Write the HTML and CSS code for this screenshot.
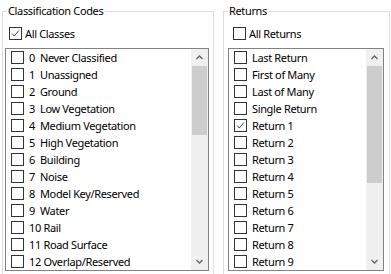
FILE: index.html
```html
<!DOCTYPE html>
<html>
<head>
<meta charset="utf-8">
<link rel="stylesheet" href="styles.css">
</head>
<body>
<div class="panes">
  <fieldset class="group group-codes">
    <legend>Classification Codes</legend>
    <label class="check all-row"><span class="box"><svg viewBox="0 0 13 13" class="tick"><polyline points="2.5,6.5 5,9.5 10.5,3"/></svg></span>All Classes</label>
    <div class="listbox list-codes">
      <ul class="items">
        <li><span class="box"></span><span class="label">0  Never Classified</span></li>
        <li><span class="box"></span><span class="label">1  Unassigned</span></li>
        <li><span class="box"></span><span class="label">2  Ground</span></li>
        <li><span class="box"></span><span class="label">3  Low Vegetation</span></li>
        <li><span class="box"></span><span class="label">4  Medium Vegetation</span></li>
        <li><span class="box"></span><span class="label">5  High Vegetation</span></li>
        <li><span class="box"></span><span class="label">6  Building</span></li>
        <li><span class="box"></span><span class="label">7  Noise</span></li>
        <li><span class="box"></span><span class="label">8  Model Key/Reserved</span></li>
        <li><span class="box"></span><span class="label">9  Water</span></li>
        <li><span class="box"></span><span class="label">10 Rail</span></li>
        <li><span class="box"></span><span class="label">11 Road Surface</span></li>
        <li><span class="box"></span><span class="label">12 Overlap/Reserved</span></li>
      </ul>
      <div class="scrollbar">
        <div class="sb-btn"><svg viewBox="0 0 17 17" class="arrow"><polyline points="5.5,10 8.5,7 11.5,10"/></svg></div>
        <div class="track"><div class="thumb thumb-codes"></div></div>
        <div class="sb-btn"><svg viewBox="0 0 17 17" class="arrow"><polyline points="5.5,7 8.5,10 11.5,7"/></svg></div>
      </div>
    </div>
  </fieldset>
  <fieldset class="group group-returns">
    <legend>Returns</legend>
    <label class="check all-row"><span class="box"></span>All Returns</label>
    <div class="listbox list-returns">
      <ul class="items">
        <li><span class="box"></span><span class="label">Last Return</span></li>
        <li><span class="box"></span><span class="label">First of Many</span></li>
        <li><span class="box"></span><span class="label">Last of Many</span></li>
        <li><span class="box"></span><span class="label">Single Return</span></li>
        <li><span class="box"><svg viewBox="0 0 13 13" class="tick"><polyline points="2.5,6.5 5,9.5 10.5,3"/></svg></span><span class="label">Return 1</span></li>
        <li><span class="box"></span><span class="label">Return 2</span></li>
        <li><span class="box"></span><span class="label">Return 3</span></li>
        <li><span class="box"></span><span class="label">Return 4</span></li>
        <li><span class="box"></span><span class="label">Return 5</span></li>
        <li><span class="box"></span><span class="label">Return 6</span></li>
        <li><span class="box"></span><span class="label">Return 7</span></li>
        <li><span class="box"></span><span class="label">Return 8</span></li>
        <li><span class="box"></span><span class="label">Return 9</span></li>
      </ul>
      <div class="scrollbar">
        <div class="sb-btn"><svg viewBox="0 0 17 17" class="arrow"><polyline points="5.5,10 8.5,7 11.5,10"/></svg></div>
        <div class="track"><div class="thumb thumb-returns"></div></div>
        <div class="sb-btn"><svg viewBox="0 0 17 17" class="arrow"><polyline points="5.5,7 8.5,10 11.5,7"/></svg></div>
      </div>
    </div>
  </fieldset>
</div>
</body>
</html>
```

FILE: styles.css
```css
html, body {
  margin: 0;
  padding: 0;
  background: #ffffff;
  overflow: hidden;
}
body {
  font-family: "Noto Sans", "Segoe UI", sans-serif;
  font-size: 11px;
  letter-spacing: -0.35px;
  color: #000000;
}
.panes {
  display: flex;
  gap: 9px;
  padding: 4px 0 0 2px;
}
.group {
  margin: 0;
  border: 1px solid #dcdcdc;
  padding: 0;
  height: 300px;
  min-width: 0;
  box-sizing: border-box;
}
.group legend {
  padding: 0 2px 0 1px;
  margin-left: 4px;
  line-height: 14px;
  height: 14px;
}
.group-codes { width: 212px; }
.group-returns { width: 167px; }
.check {
  display: flex;
  align-items: center;
}
.all-row {
  margin-top: 9px;
  height: 13px;
}
.group-codes .all-row { padding-left: 6px; }
.group-returns .all-row { padding-left: 9px; }
.box {
  width: 13px;
  height: 13px;
  box-sizing: border-box;
  border: 1px solid #333333;
  background: #ffffff;
  margin-right: 3px;
  flex: none;
  display: block;
}
.tick {
  display: block;
  width: 11px;
  height: 11px;
  fill: none;
  stroke: #333333;
  stroke-width: 1.1;
}
.listbox {
  margin-top: 8px;
  border: 1px solid #828282;
  height: 223px;
  box-sizing: border-box;
  display: flex;
  overflow: hidden;
}
.list-codes { width: 204px; margin-left: 2px; }
.list-returns { width: 156px; margin-left: 4px; }
.items {
  list-style: none;
  margin: 0;
  padding: 0;
  flex: 1;
  min-width: 0;
}
.items li {
  display: flex;
  align-items: center;
  height: 17px;
  padding-left: 5px;
  white-space: pre;
}
.items .box { margin-right: 5px; }
.scrollbar {
  width: 17px;
  flex: none;
  background: #f0f0f0;
  display: flex;
  flex-direction: column;
}
.sb-btn {
  height: 17px;
  flex: none;
}
.arrow {
  display: block;
  width: 17px;
  height: 17px;
  fill: none;
  stroke: #606060;
  stroke-width: 1.3;
}
.track {
  flex: 1;
  padding: 0 1px;
}
.thumb {
  background: #cdcdcd;
}
.thumb-codes { height: 69px; }
.thumb-returns { height: 117px; }
```
